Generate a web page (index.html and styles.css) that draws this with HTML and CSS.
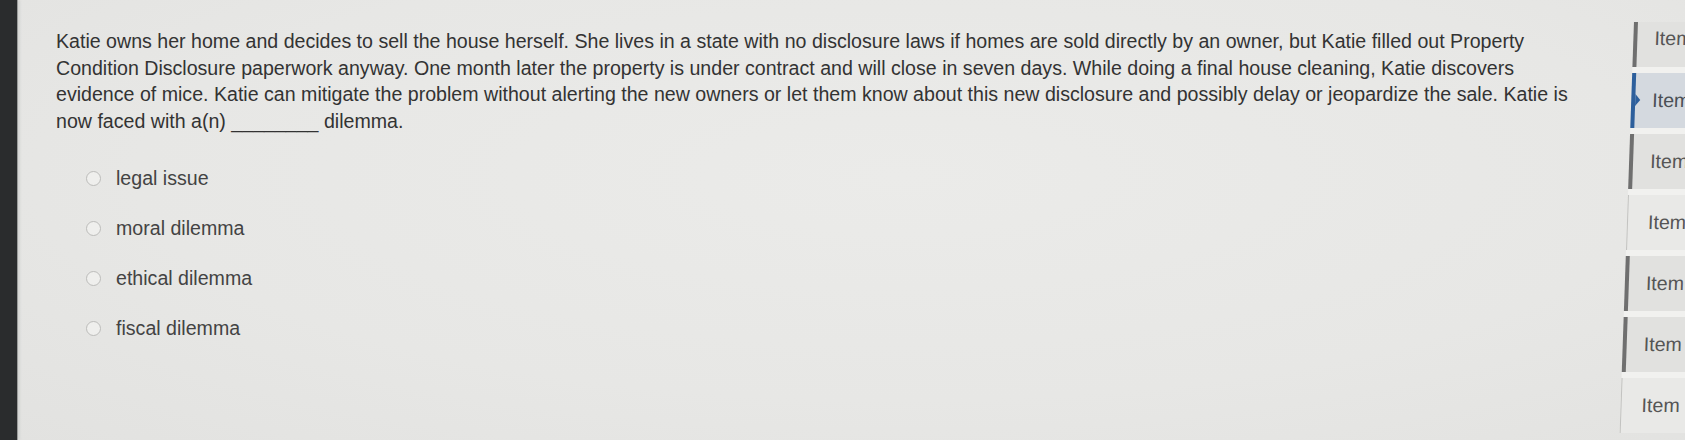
FILE: index.html
```html
<!DOCTYPE html>
<html lang="en">
<head>
<meta charset="utf-8">
<title>Question</title>
<link rel="stylesheet" href="styles.css">
</head>
<body>
<div class="screen">
  <div class="bezel"></div>
  <main class="content">
    <p class="question">Katie owns her home and decides to sell the house herself. She lives in a state with no disclosure laws if homes are sold directly by an owner, but Katie filled out Property<br>Condition Disclosure paperwork anyway. One month later the property is under contract and will close in seven days. While doing a final house cleaning, Katie discovers<br>evidence of mice. Katie can mitigate the problem without alerting the new owners or let them know about this new disclosure and possibly delay or jeopardize the sale. Katie is<br>now faced with a(n) ________ dilemma.</p>
    <ul class="options">
      <li class="option"><span class="radio"></span><span class="label">legal issue</span></li>
      <li class="option"><span class="radio"></span><span class="label">moral dilemma</span></li>
      <li class="option"><span class="radio"></span><span class="label">ethical dilemma</span></li>
      <li class="option"><span class="radio"></span><span class="label">fiscal dilemma</span></li>
    </ul>
  </main>
  <nav class="items">
    <div class="item first">Item</div>
    <div class="item active">Item</div>
    <div class="item">Item</div>
    <div class="item plain">Item</div>
    <div class="item">Item</div>
    <div class="item">Item</div>
    <div class="item plain">Item</div>
  </nav>
</div>
</body>
</html>
```
FILE: styles.css
```css
html, body {
  margin: 0;
  padding: 0;
  height: 100%;
  overflow: hidden;
}

body {
  background: #e7e7e5;
  font-family: "Liberation Sans", Arial, sans-serif;
  color: #333;
}

.screen {
  display: flex;
  height: 440px;
  width: 1800px;
  background: radial-gradient(ellipse at 50% 40%, #ebebe9 0%, #e7e7e5 60%, #e2e2e0 100%);
}

.bezel {
  flex: 0 0 17px;
  background: #2a2c2d;
  box-shadow: 1px 0 0 #9a9c9b, 3px 0 2px #d4d5d3;
}

.content {
  flex: 0 0 1571px;
  padding: 28px 0 0 39px;
}

.question {
  margin: 0;
  font-size: 19.6px;
  line-height: 26.7px;
  white-space: nowrap;
}

.options {
  list-style: none;
  margin: 30px 0 0 0;
  padding: 0 0 0 30px;
  display: flex;
  flex-direction: column;
  gap: 23px;
}

.option {
  display: flex;
  align-items: center;
  gap: 15px;
  font-size: 19.6px;
  line-height: 27px;
  color: #434343;
}

.radio {
  width: 13px;
  height: 13px;
  border: 1.5px solid #bcbcba;
  border-radius: 50%;
  background: #efefed;
}

.items {
  flex: 0 0 140px;
  margin-top: 22px;
  display: flex;
  flex-direction: column;
  gap: 6px;
  background: #f1f1ef;
  align-self: flex-start;
  transform: skewX(-2deg);
  transform-origin: 0 200px;
}

.item {
  position: relative;
  height: 55px;
  line-height: 55px;
  padding-left: 17px;
  border-left: 4px solid #6f6f6f;
  background: #e1e1df;
  font-size: 19.6px;
  color: #555;
  white-space: nowrap;
}

.item.first {
  height: 45px;
  line-height: 32px;
}

.item.active {
  background: #d4d9df;
  border-left-color: #2d5f9c;
  color: #4a4f55;
}

.item.active::before {
  content: "";
  position: absolute;
  left: 0;
  top: 21px;
  border-top: 6px solid transparent;
  border-bottom: 6px solid transparent;
  border-left: 5px solid #2d5f9c;
}

.item.plain {
  border-left: 1px solid #c2c2c0;
  padding-left: 20px;
  background: #e9e9e7;
}
```
